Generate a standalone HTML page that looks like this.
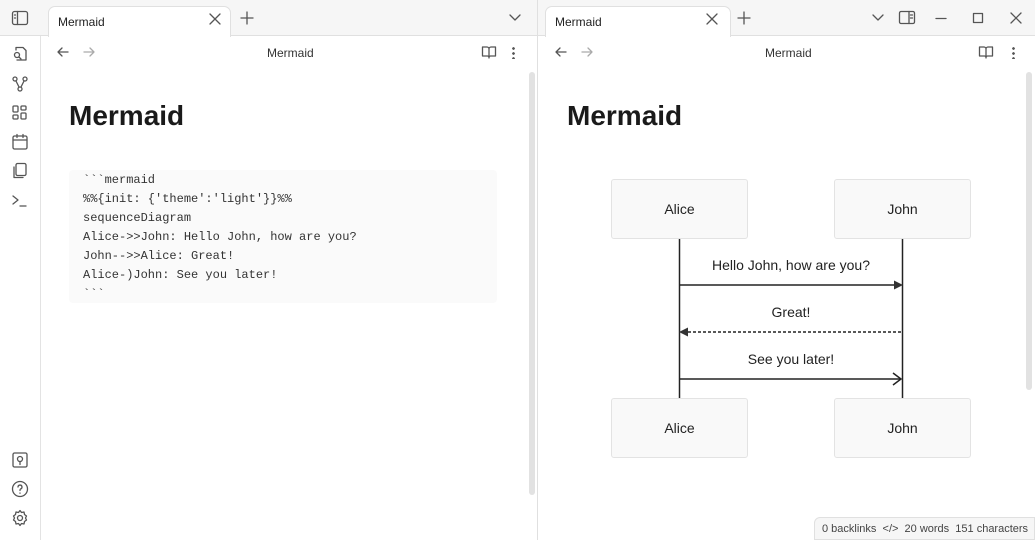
<!DOCTYPE html>
<html><head><style>
*{box-sizing:border-box;margin:0;padding:0}
body{width:1035px;height:540px;overflow:hidden;background:#fff;font-family:"Liberation Sans",sans-serif;position:relative;color:#222}
.abs{position:absolute}
.top{left:0;top:0;width:1035px;height:36px;background:#f6f6f6;border-bottom:1px solid #e0e0e0}
.tab{top:6px;height:31px;background:#fff;border:1px solid #e0e0e0;border-bottom:none;border-radius:7px 7px 0 0;font-size:12px;padding:8px 0 0 9px;color:#222}
.tt{font-size:12px;color:#333}
.h1{position:absolute;font-size:28px;font-weight:bold;color:#1a1a1a}
.code{position:absolute;left:69px;top:170px;width:428px;height:133px;background:#fafafa;border-radius:4px}
.cl{position:absolute;left:83px;font-family:"Liberation Mono","DejaVu Sans Mono",monospace;font-size:12px;color:#333;white-space:pre;line-height:14px}
.box{position:absolute;width:137px;height:60px;background:#f9f9f9;border:1px solid #e3e3e3;border-radius:3px;font-size:14px;text-align:center;line-height:58px;color:#222}
.lbl{position:absolute;left:680px;width:222px;text-align:center;font-size:14px;color:#222}
svg.i{position:absolute;fill:none;stroke:#555;stroke-width:1.3;stroke-linecap:round;stroke-linejoin:round}
</style></head><body>
<div class="abs top"></div>
<div class="abs" style="left:40px;top:36px;width:1px;height:504px;background:#e3e3e3"></div>
<div class="abs" style="left:537px;top:0;width:1px;height:540px;background:#e0e0e0"></div>
<div class="abs tab" style="left:48px;width:183px">Mermaid</div>
<div class="abs tab" style="left:545px;width:186px">Mermaid</div>
<svg class="i" style="left:11px;top:10px" width="18" height="16"><rect x="1.5" y="1.5" width="15" height="13" rx="2"/><path d="M6.5 1.5v13M3.5 5h1M3.5 8h1"/></svg>
<svg class="i" style="left:208px;top:12px" width="14" height="14"><path d="M2 2l10 10M12 2L2 12"/></svg>
<svg class="i" style="left:705px;top:12px" width="14" height="14"><path d="M2 2l10 10M12 2L2 12"/></svg>
<svg class="i" style="left:240px;top:11px" width="14" height="14"><path d="M7 1v12M1 7h12"/></svg>
<svg class="i" style="left:737px;top:11px" width="14" height="14"><path d="M7 1v12M1 7h12"/></svg>
<svg class="i" style="left:508px;top:14px" width="14" height="8"><path d="M2 1l5 5 5-5"/></svg>
<svg class="i" style="left:871px;top:14px" width="14" height="8"><path d="M2 1l5 5 5-5"/></svg>
<svg class="i" style="left:898px;top:10px" width="18" height="16"><rect x="1.5" y="1.5" width="15" height="12" rx="1.5"/><path d="M11 1.5v12M12.5 5h2M12.5 8h2"/></svg>
<svg class="i" style="left:935px;top:12px" width="12" height="12"><path d="M1 6.5h10"/></svg>
<svg class="i" style="left:972px;top:12px" width="12" height="12"><rect x="1.5" y="1.5" width="9" height="9"/></svg>
<svg class="i" style="left:1010px;top:12px" width="12" height="12"><path d="M1 1l10 10M11 1L1 11"/></svg>
<svg class="i" style="left:11px;top:45px" width="18" height="18"><path d="M5 5V2.5h7l3 3V15H6"/><circle cx="6" cy="10" r="2.5"/><path d="M8 12l2 2"/></svg>
<svg class="i" style="left:11px;top:75px" width="18" height="18"><circle cx="4" cy="4" r="2"/><circle cx="14" cy="4" r="2"/><circle cx="9" cy="14" r="2"/><path d="M5 6l3 6M13 6l-3 6"/></svg>
<svg class="i" style="left:11px;top:104px" width="18" height="18"><rect x="2" y="2" width="5" height="6" rx="1"/><rect x="10" y="2" width="5" height="4" rx="1"/><rect x="2" y="11" width="5" height="4" rx="1"/><rect x="10" y="9" width="5" height="6" rx="1"/></svg>
<svg class="i" style="left:11px;top:133px" width="18" height="18"><rect x="2" y="3" width="14" height="13" rx="1.5"/><path d="M2 7h14M6 1.5v3M12 1.5v3"/></svg>
<svg class="i" style="left:11px;top:162px" width="18" height="18"><rect x="5" y="1.5" width="10" height="12" rx="1.5"/><path d="M3 5v10.5h9"/></svg>
<svg class="i" style="left:11px;top:192px" width="18" height="18"><path d="M2 4l5 4-5 4M9 14h6"/></svg>
<svg class="i" style="left:11px;top:451px" width="18" height="18"><rect x="2" y="2" width="14" height="14" rx="1.5"/><circle cx="9" cy="8" r="2.5"/><path d="M9 10.5v3"/></svg>
<svg class="i" style="left:11px;top:480px" width="18" height="18"><circle cx="9" cy="9" r="7.5"/><path d="M7 7a2 2 0 1 1 2.5 2c-.5.2-.5.8-.5 1.5M9 13v.2"/></svg>
<svg class="i" style="left:11px;top:509px" width="18" height="18"><circle cx="9" cy="9" r="2.5"/><path d="M9 1.5l1.5 2 2.5-.5.5 2.5 2 1.5-1 2 1 2-2 1.5-.5 2.5-2.5-.5-1.5 2-1.5-2-2.5.5-.5-2.5-2-1.5 1-2-1-2 2-1.5.5-2.5 2.5.5z"/></svg>
<svg class="i" style="left:56px;top:45px" width="14" height="14"><path d="M12 7H2M6 3L2 7l4 4"/></svg>
<svg class="i" style="left:82px;top:45px;stroke:#aaa" width="14" height="14"><path d="M2 7h10M8 3l4 4-4 4"/></svg>
<svg class="i" style="left:554px;top:45px" width="14" height="14"><path d="M12 7H2M6 3L2 7l4 4"/></svg>
<svg class="i" style="left:580px;top:45px;stroke:#aaa" width="14" height="14"><path d="M2 7h10M8 3l4 4-4 4"/></svg>
<div class="abs tt" style="left:267px;top:46px">Mermaid</div>
<div class="abs tt" style="left:765px;top:46px">Mermaid</div>
<svg class="i" style="left:481px;top:45px" width="16" height="14"><path d="M8 3v10M1.5 2h4.5a2 2 0 0 1 2 2 2 2 0 0 1 2-2h4.5v9h-5a1.5 1.5 0 0 0-1.5 1.5 1.5 1.5 0 0 0-1.5-1.5h-5z"/></svg>
<svg class="i" style="left:978px;top:45px" width="16" height="14"><path d="M8 3v10M1.5 2h4.5a2 2 0 0 1 2 2 2 2 0 0 1 2-2h4.5v9h-5a1.5 1.5 0 0 0-1.5 1.5 1.5 1.5 0 0 0-1.5-1.5h-5z"/></svg>
<div class="abs" style="left:512px;top:46px;width:3px;height:13px;background:radial-gradient(circle,#555 1.2px,transparent 1.5px) 0 0/3px 5px"></div>
<div class="abs" style="left:1012px;top:46px;width:3px;height:13px;background:radial-gradient(circle,#555 1.2px,transparent 1.5px) 0 0/3px 5px"></div>
<div class="abs" style="left:529px;top:72px;width:6px;height:423px;background:#e2e2e2;border-radius:3px"></div>
<div class="abs" style="left:1026px;top:72px;width:6px;height:318px;background:#e2e2e2;border-radius:3px"></div>
<div class="h1" style="left:69px;top:100px">Mermaid</div>
<div class="h1" style="left:567px;top:100px">Mermaid</div>
<div class="code"></div>
<div class="cl" style="top:173px">&#96;&#96;&#96;mermaid</div>
<div class="cl" style="top:192px">%%{init: {'theme':'light'}}%%</div>
<div class="cl" style="top:211px">sequenceDiagram</div>
<div class="cl" style="top:230px">Alice-&gt;&gt;John: Hello John, how are you?</div>
<div class="cl" style="top:249px">John--&gt;&gt;Alice: Great!</div>
<div class="cl" style="top:268px">Alice-)John: See you later!</div>
<div class="cl" style="top:287px">&#96;&#96;&#96;</div>
<div class="box" style="left:611px;top:179px">Alice</div>
<div class="box" style="left:834px;top:179px">John</div>
<div class="box" style="left:611px;top:398px">Alice</div>
<div class="box" style="left:834px;top:398px">John</div>
<svg class="abs" style="left:600px;top:230px" width="320" height="170">
<g stroke="#222" stroke-width="1.5" fill="none"><path d="M79.5 9v159M302.5 9v159M80 55h215M80 149h220"/><path d="M88 102h214" stroke-dasharray="3 2"/><path d="M293 143l8 6-8 6"/></g>
<path d="M303 55l-9-4.5v9zM79 102l9-4.5v9z" fill="#333"/>
</svg>
<div class="lbl" style="top:257px">Hello John, how are you?</div>
<div class="lbl" style="top:304px">Great!</div>
<div class="lbl" style="top:351px">See you later!</div>
<div class="abs" style="left:814px;top:517px;width:221px;height:23px;background:#f6f6f6;border:1px solid #e0e0e0;border-radius:6px 0 0 0;font-size:11px;color:#444;padding:5px 0 0 7px;white-space:nowrap">0 backlinks &nbsp;&lt;/&gt;&nbsp; 20 words &nbsp;151 characters</div>
</body></html>
